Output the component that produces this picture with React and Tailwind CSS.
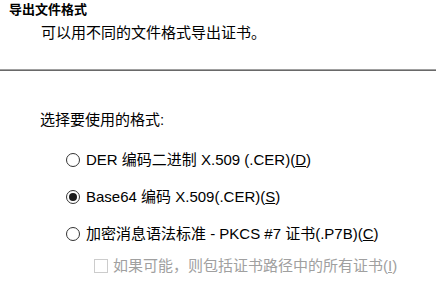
import React from "react";

function Radio({ checked }) {
  return (
    <span className="w-[14px] h-[14px] rounded-full border border-[#333333] bg-white flex items-center justify-center shrink-0">
      {checked && <span className="w-[8px] h-[8px] rounded-full bg-[#1a1a1a]" />}
    </span>
  );
}

export default function App() {
  return (
    <div className="w-[436px] h-[292px] bg-white text-[#000000] overflow-hidden font-['Liberation_Sans','Noto_Sans_CJK_SC',sans-serif]">
      <div className="h-[69px] pl-[9px] pt-[0px]">
        <div className="text-[13px] font-bold leading-[19px]">导出文件格式</div>
        <div className="pl-[32px] mt-[4px] text-[15px] leading-[20px]">可以用不同的文件格式导出证书。</div>
      </div>
      <div className="h-[1px] bg-[#a0a0a0]" />
      <div className="h-[1px] bg-[#696969]" />
      <div className="pl-[40px] pt-[39px] text-[15px] leading-[20px]">
        <div>选择要使用的格式:</div>
        <div className="mt-[19.5px] pl-[26px] flex flex-col gap-[17px]">
          <div className="flex items-center gap-[6px]">
            <Radio />
            <span>DER 编码二进制 X.509 (.CER)(<u>D</u>)</span>
          </div>
          <div className="flex items-center gap-[6px]">
            <Radio checked />
            <span>Base64 编码 X.509(.CER)(<u>S</u>)</span>
          </div>
          <div className="flex items-center gap-[6px]">
            <Radio />
            <span>加密消息语法标准 - PKCS #7 证书(.P7B)(<u>C</u>)</span>
          </div>
        </div>
        <div className="mt-[12.5px] pl-[54px] flex items-center gap-[5px] text-[#a0a0a0]">
          <span className="w-[14px] h-[14px] border border-[#cccccc] bg-white shrink-0" />
          <span>如果可能，则包括证书路径中的所有证书(<u>I</u>)</span>
        </div>
      </div>
    </div>
  );
}
